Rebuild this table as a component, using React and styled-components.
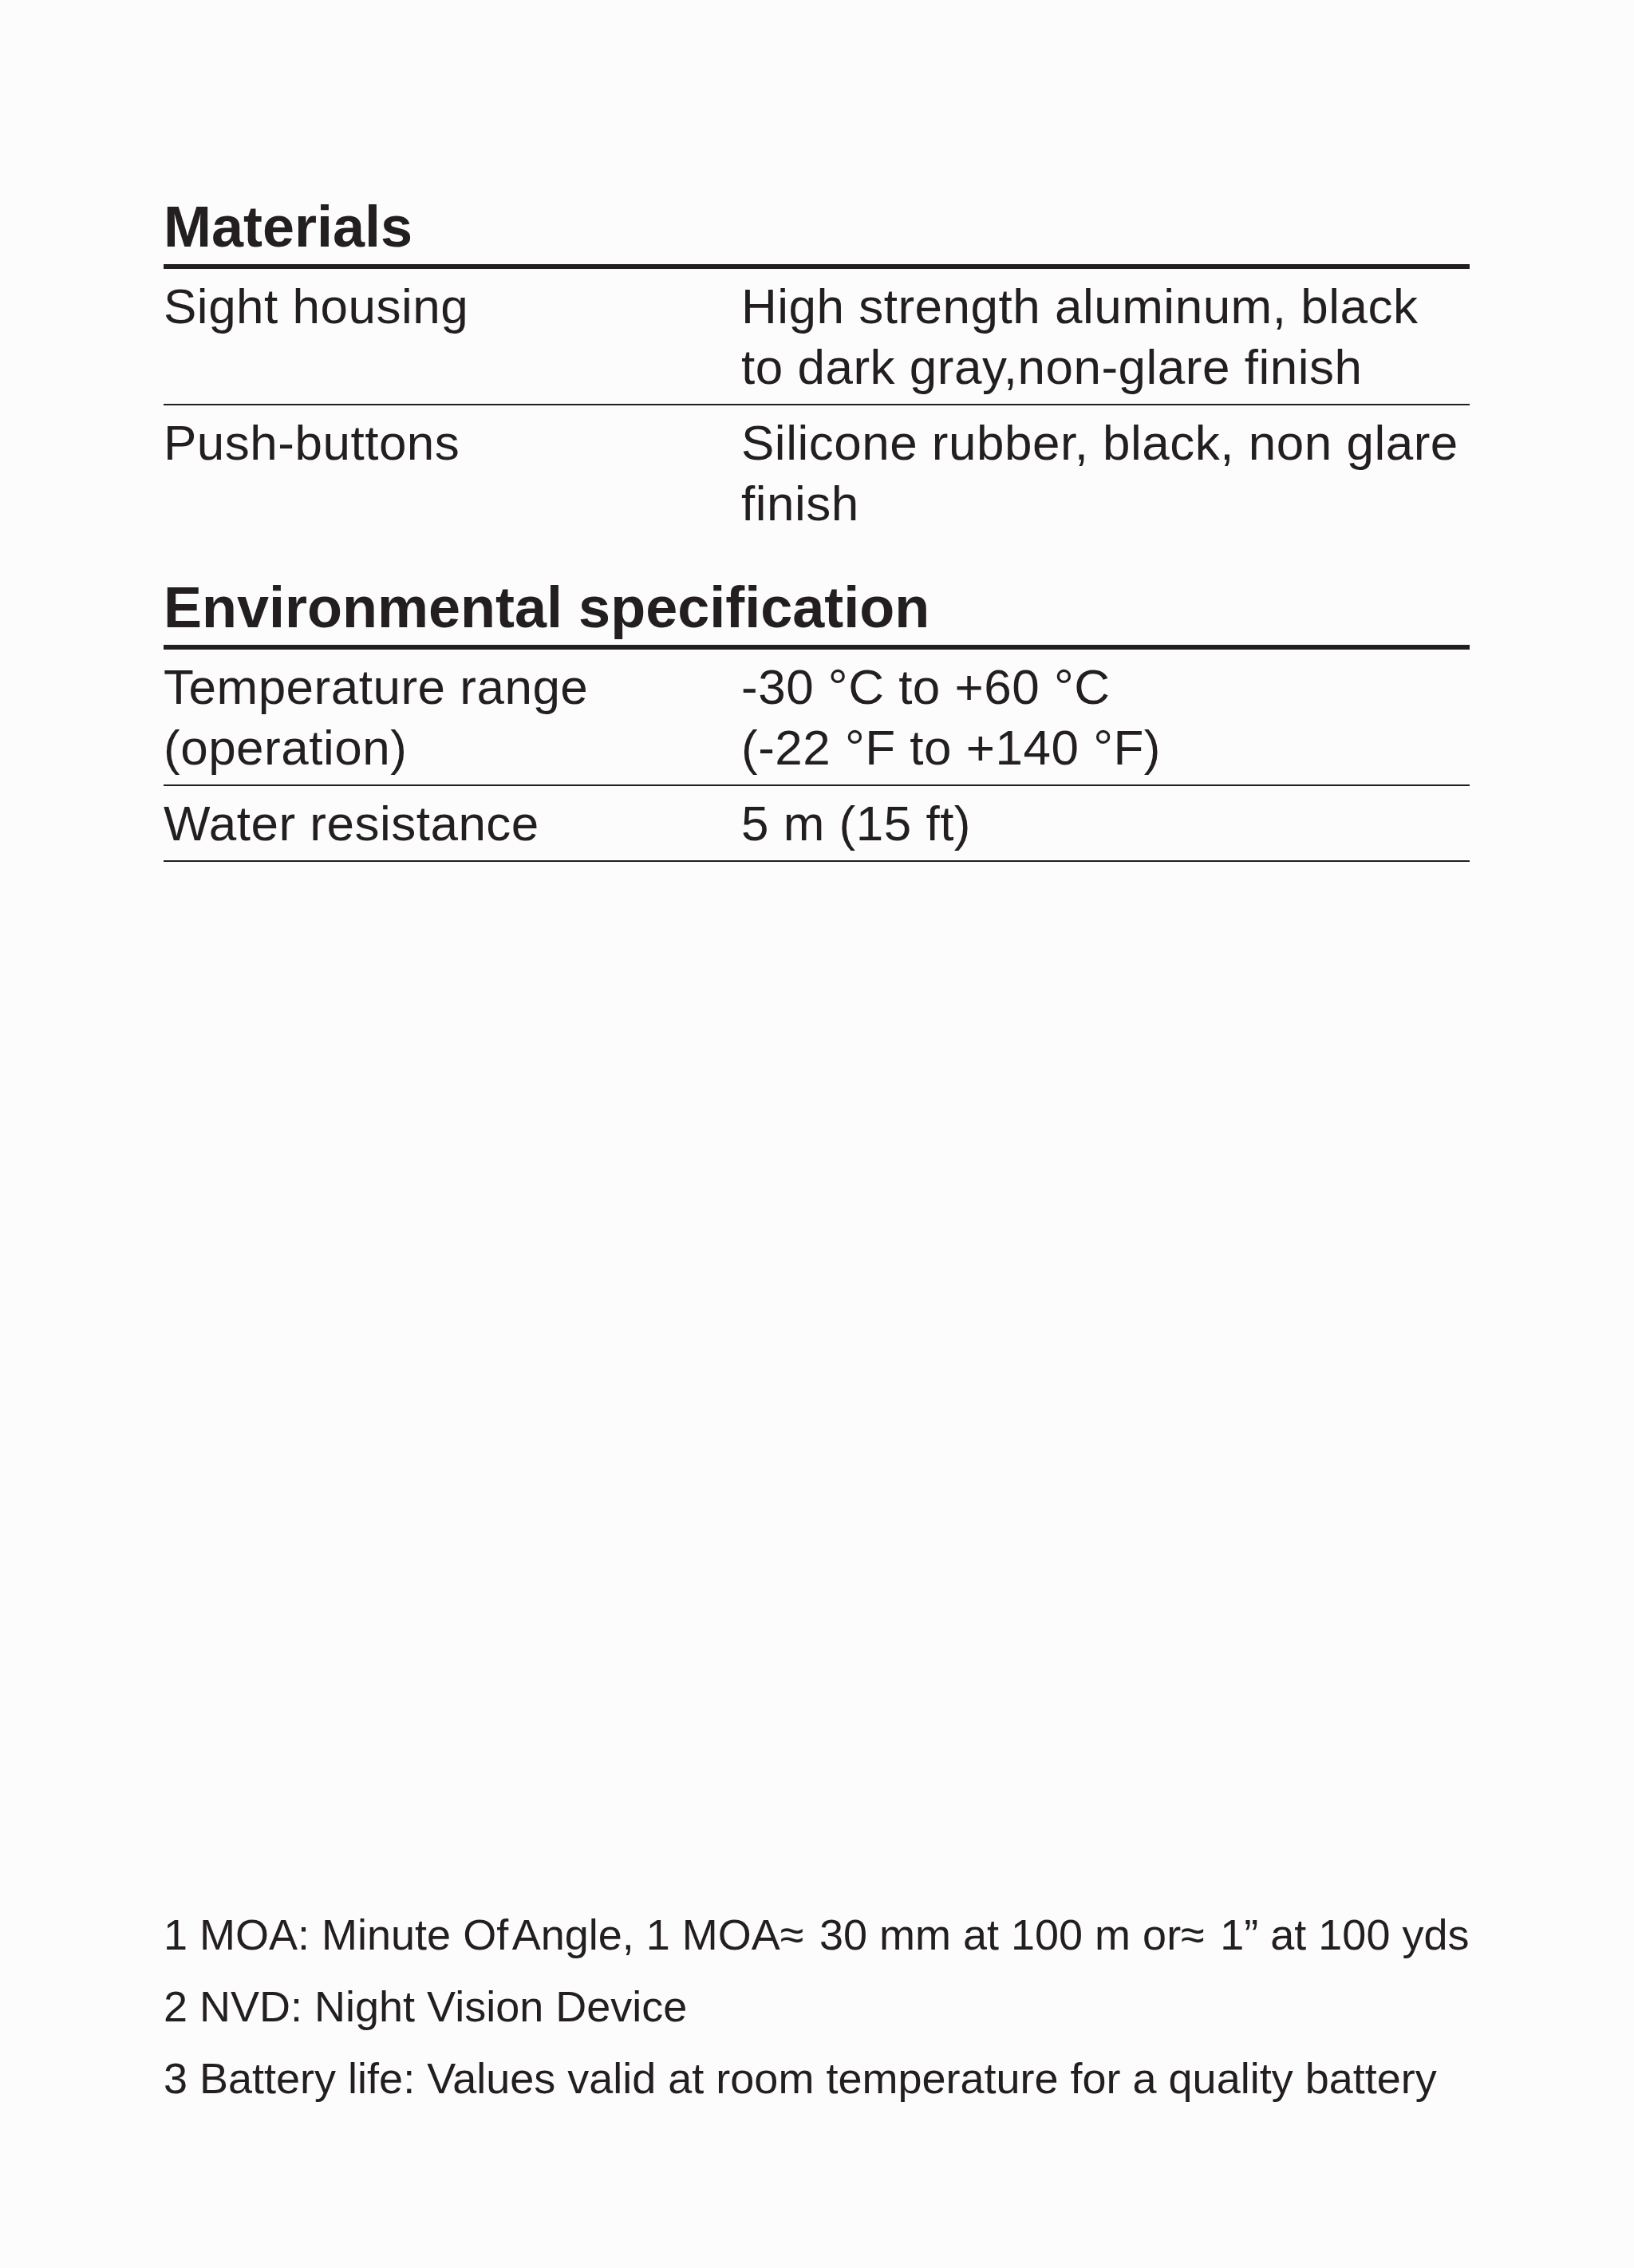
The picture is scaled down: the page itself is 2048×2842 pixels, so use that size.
import React from 'react';
import styled, { createGlobalStyle } from 'styled-components';

const ink = '#231f20';

const GlobalStyle = createGlobalStyle`
    html, body {
        margin: 0;
        padding: 0;
        background: #fdfcfd;
    }
    body {
        font-family: 'Liberation Sans', Arial, sans-serif;
        color: ${ink};
    }
`;

const sections = [
    {
        title: 'Materials',
        rows: [
            { label: ['Sight housing'], value: ['High strength aluminum, black', 'to dark gray,non-glare finish'] },
            { label: ['Push-buttons'], value: ['Silicone rubber, black, non glare', 'finish'], last: true },
        ],
    },
    {
        title: 'Environmental specification',
        rows: [
            { label: ['Temperature range', '(operation)'], value: ['-30 °C to +60 °C', '(-22 °F to +140 °F)'] },
            { label: ['Water resistance'], value: ['5 m (15 ft)'] },
        ],
    },
];

const notes = [
    '1 MOA: Minute Of\u200AAngle, 1 MOA\u2248\u200A 30 mm at 100 m or\u2248\u200A 1\u201d at 100 yds',
    '2 NVD: Night Vision Device',
    '3 Battery life: Values valid at room temperature for a quality battery',
];

const App = () => (
    <Page>
        <GlobalStyle />
        {sections.map((section, i) => (
            <Section key={section.title} first={i === 0}>
                <Heading>{section.title}</Heading>
                {section.rows.map((row) => (
                    <Row key={row.label[0]} noRule={row.last}>
                        <Cell>{row.label.map((l) => <Line key={l}>{l}</Line>)}</Cell>
                        <Cell>{row.value.map((v) => <Line key={v}>{v}</Line>)}</Cell>
                    </Row>
                ))}
            </Section>
        ))}
        <Notes>
            {notes.map((n) => <Note key={n}>{n}</Note>)}
        </Notes>
    </Page>
);

const Page = styled.div`
    box-sizing: border-box;
    min-height: 100vh;
    display: flex;
    flex-direction: column;
    padding: 248px 0 193px 205px;
    width: 1842px;
`;

const Section = styled.section`
    margin-top: ${({ first }) => (first ? '0' : '46px')};
`;

const Heading = styled.h2`
    margin: 0;
    font-size: 72px;
    line-height: 72px;
    font-weight: 700;
    padding-bottom: 11px;
    border-bottom: 6px solid ${ink};
    white-space: nowrap;
`;

const Row = styled.div`
    display: grid;
    grid-template-columns: 724px 1fr;
    padding: 9px 0 8px;
    border-bottom: ${({ noRule }) => (noRule ? '2px solid transparent' : `2px solid ${ink}`)};
`;

const Cell = styled.div`
    font-size: 62px;
    line-height: 76px;
    letter-spacing: 0.5px;
`;

const Line = styled.div`
    white-space: nowrap;
`;

const Notes = styled.div`
    margin-top: auto;
    display: flex;
    flex-direction: column;
`;

const Note = styled.p`
    margin: 0;
    font-size: 54px;
    line-height: 90px;
    white-space: pre;
`;

export default App;
